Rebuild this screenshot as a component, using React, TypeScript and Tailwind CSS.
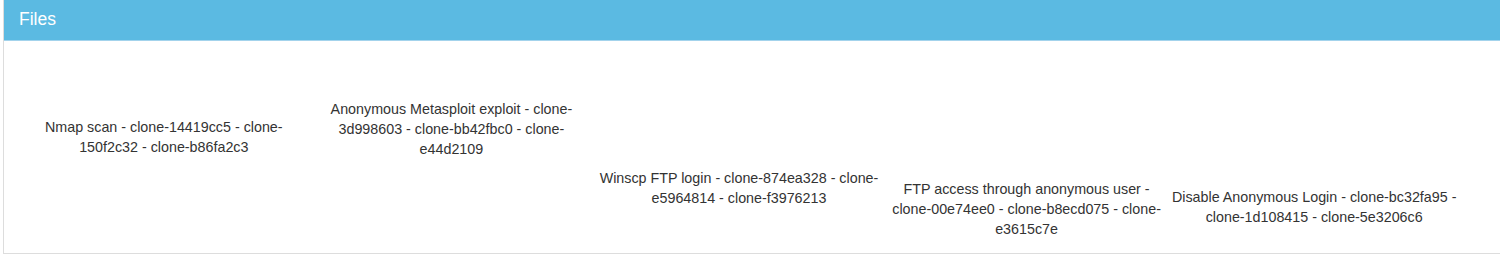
const files = [
  { label: "Nmap scan - clone-14419cc5 - clone-150f2c32 - clone-b86fa2c3", offset: "mt-[61px]" },
  { label: "Anonymous Metasploit exploit - clone-3d998603 - clone-bb42fbc0 - clone-e44d2109", offset: "mt-[43px]" },
  { label: "Winscp FTP login - clone-874ea328 - clone-e5964814 - clone-f3976213", offset: "mt-[112px]" },
  { label: "FTP access through anonymous user - clone-00e74ee0 - clone-b8ecd075 - clone-e3615c7e", offset: "mt-[123px]" },
  { label: "Disable Anonymous Login - clone-bc32fa95 - clone-1d108415 - clone-5e3206c6", offset: "mt-[131px]" },
];

export default function App() {
  return (
    <div className="w-[1500px] h-[262px] bg-white overflow-hidden font-['Liberation_Sans',Arial,sans-serif]">
      <div className="ml-[3px] w-[1510px] border-l border-b border-[#dddddd]">
        <div className="h-[41px] bg-[#5bbae2] border-b border-[#a3d3ec] flex items-center pl-[15px]">
          <h3 className="text-[17.5px] leading-none text-white">Files</h3>
        </div>
        <div className="flex items-start pl-[16px] pt-[15px] pb-[14px] text-[14.3px] leading-[20px] text-[#333333]">
          {files.map((f) => (
            <div key={f.label} className={`w-[287.6px] shrink-0 flex justify-center ${f.offset}`}>
              <div className="w-[286px] text-center">{f.label}</div>
            </div>
          ))}
        </div>
      </div>
    </div>
  );
}
